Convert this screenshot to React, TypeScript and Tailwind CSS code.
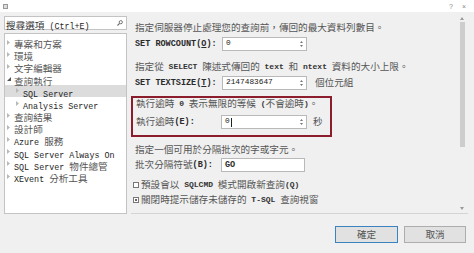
import React from 'react';

const CJK = "font-['Noto_Sans_CJK_TC',sans-serif] text-[9.6px] text-[#555]";
const MONO_B = "font-['Liberation_Mono',monospace] text-[8px] font-bold text-[#333]";
const MONO_L = "font-['Liberation_Mono',monospace] text-[8.5px] font-bold text-[#2a2a2a]";
const MONO_T = "font-['Liberation_Mono',monospace] text-[8.4px] text-[#1e1e1e]";

function Mixed({ text, mono, cjk = CJK }: { text: string; mono: string; cjk?: string }) {
  const parts = text.split(/([\x20-\x7E]+)/).filter(Boolean);
  return (
    <>
      {parts.map((p, i) =>
        /^[\x20-\x7E]+$/.test(p) ? (
          <span key={i} className={mono + ' whitespace-pre'}>
            {p}
          </span>
        ) : (
          <span key={i} className={cjk}>
            {p}
          </span>
        ),
      )}
    </>
  );
}

type Node = { text: string; level: number; open?: boolean; selected?: boolean };

const TREE: Node[] = [
  { text: '專案和方案', level: 0 },
  { text: '環境', level: 0 },
  { text: '文字編輯器', level: 0 },
  { text: '查詢執行', level: 0, open: true },
  { text: 'SQL Server', level: 1, selected: true },
  { text: 'Analysis Server', level: 1 },
  { text: '查詢結果', level: 0 },
  { text: '設計師', level: 0 },
  { text: 'Azure 服務', level: 0 },
  { text: 'SQL Server Always On', level: 0 },
  { text: 'SQL Server 物件總管', level: 0 },
  { text: 'XEvent 分析工具', level: 0 },
];

function Arrow({ open }: { open?: boolean }) {
  return open ? (
    <svg width="4" height="4" viewBox="0 0 4 4">
      <path d="M4 0 L4 4 L0 4 Z" fill="#555" />
    </svg>
  ) : (
    <svg width="3" height="5" viewBox="0 0 3 5">
      <path d="M0 0 L3 2.5 L0 5 Z" fill="#b8b8b8" />
    </svg>
  );
}

function Spinner() {
  return (
    <div className="flex flex-col items-center justify-center gap-[2px] w-[7px] mr-[1px]">
      <svg width="3" height="2" viewBox="0 0 3 2">
        <path d="M0 2 L1.5 0 L3 2 Z" fill="#777" />
      </svg>
      <svg width="3" height="2" viewBox="0 0 3 2">
        <path d="M0 0 L3 0 L1.5 2 Z" fill="#777" />
      </svg>
    </div>
  );
}

function NumBox({ value, w, focused, spin = true }: { value: string; w: string; focused?: boolean; spin?: boolean }) {
  return (
    <div className={'h-[14px] bg-white border border-[#b9b9b9] flex items-center ' + w}>
      <span className={"pl-[3px] font-['Liberation_Mono',monospace] text-[7.8px] text-[#222] leading-none"}>{value}</span>
      {focused && <span className="ml-[1px] w-px h-[9px] bg-[#222]" />}
      <div className="flex-1" />
      {spin && <Spinner />}
    </div>
  );
}

function Label({ children, w }: { children: React.ReactNode; w: string }) {
  return <div className={'shrink-0 flex items-center leading-none ' + w}>{children}</div>;
}

function Check({ checked }: { checked?: boolean }) {
  return (
    <div className="w-[6px] h-[6px] border border-[#777] bg-white flex items-center justify-center mr-[2px]">
      {checked && <div className="w-[2px] h-[2px] bg-[#666]" />}
    </div>
  );
}

export default function App() {
  return (
    <div className="w-[474px] h-[253px] bg-[#f0f0f0] flex flex-col overflow-hidden select-none">
      {/* title bar */}
      <div className="h-[12px] bg-white flex items-center justify-between px-[3px] shrink-0">
        <div className="w-[5px] h-[5px] border border-[#999] bg-[#ddd]" />
        <div className="flex items-center gap-[9px] pr-[5px] text-[7px] leading-none text-[#888] font-['Liberation_Sans',sans-serif]">
          <span>?</span>
          <span>×</span>
        </div>
      </div>

      <div className="flex mt-[3px] h-[199px] shrink-0">
        {/* left pane */}
        <div className="ml-[4px] w-[123px] flex flex-col pt-[1px]">
          <div className="h-[14px] bg-white border border-[#c3c3c3] flex items-center pl-[1px] pr-[3px]">
            <span className="leading-none">
              <Mixed text="搜尋選項 (Ctrl+E)" mono={MONO_T} cjk="font-['Noto_Sans_CJK_TC',sans-serif] text-[9.6px] text-[#333]" />
            </span>
            <div className="flex-1" />
            <svg width="6" height="6" viewBox="0 0 6 6">
              <circle cx="3.8" cy="2.2" r="1.6" fill="none" stroke="#666" strokeWidth="0.9" />
              <path d="M2.6 3.4 L0.5 5.5" stroke="#666" strokeWidth="1.1" />
            </svg>
          </div>
          <div className="mt-[3px] h-[181px] bg-white border border-[#c3c3c3] pt-[2px]">
            {TREE.map((n) => (
              <div
                key={n.text}
                className={'h-[12.2px] flex items-center ' + (n.selected ? 'bg-[#dcdcdc]' : '')}
              >
                <div className={'flex items-center justify-center w-[5px] ' + (n.level ? 'ml-[10px]' : 'ml-[1px]')}>
                  <Arrow open={n.open} />
                </div>
                <span className="ml-[3px] leading-none whitespace-nowrap">
                  <Mixed text={n.text} mono={MONO_T} />
                </span>
              </div>
            ))}
          </div>
        </div>

        {/* right pane */}
        <div className="ml-[4px] mr-[6px] flex-1 flex border-b border-[#d4d4d4]">
          <div className="flex-1 flex flex-col pt-[7px] leading-none">
            <div className="h-[12px] pl-[4px] flex items-center whitespace-nowrap">
              <Mixed text="指定伺服器停止處理您的查詢前，傳回的最大資料列數目。" mono={MONO_B} />
            </div>
            <div className="mt-[3px] pl-[4px] flex items-center">
              <Label w="w-[87px]">
                <span className={MONO_L + ' whitespace-pre'}>
                  SET ROWCOUNT(<span className="underline">O</span>):
                </span>
              </Label>
              <NumBox value="0" w="w-[85px]" />
            </div>
            <div className="mt-[10px] h-[12px] pl-[4px] flex items-center whitespace-nowrap">
              <Mixed text="指定從 SELECT 陳述式傳回的 text 和 ntext 資料的大小上限。" mono={MONO_B} />
            </div>
            <div className="mt-[3px] pl-[4px] flex items-center">
              <Label w="w-[87px]">
                <span className={MONO_L + ' whitespace-pre'}>
                  SET TEXTSIZE(<span className="underline">T</span>):
                </span>
              </Label>
              <NumBox value="2147483647" w="w-[85px]" />
              <span className={CJK + ' ml-[8px]'}>個位元組</span>
            </div>

            <div className="mt-[6px] w-[201px] border-2 border-[#8b1d2c] pl-[3px] pb-[6px]">
              <div className="h-[12px] flex items-center whitespace-nowrap">
                <Mixed text="執行逾時 0 表示無限的等候 (不會逾時)。" mono={MONO_B} />
              </div>
              <div className="mt-[5px] flex items-center">
                <Label w="w-[85px]">
                  <Mixed text="執行逾時(E):" mono={MONO_L} />
                </Label>
                <NumBox value="0" w="w-[86px]" focused />
                <span className={CJK + ' ml-[6px]'}>秒</span>
              </div>
            </div>

            <div className="mt-[7px] h-[12px] pl-[4px] flex items-center whitespace-nowrap">
              <Mixed text="指定一個可用於分隔批次的字或字元。" mono={MONO_B} />
            </div>
            <div className="mt-[2px] pl-[4px] flex items-center">
              <Label w="w-[86px]">
                <Mixed text="批次分隔符號(B):" mono={MONO_L} />
              </Label>
              <div className="h-[14px] w-[84px] bg-white border border-[#b9b9b9] flex items-center">
                <span className={MONO_L + ' pl-[3px]'}>GO</span>
              </div>
            </div>
            <div className="mt-[7px] h-[12px] pl-[2px] flex items-center whitespace-nowrap">
              <Check />
              <Mixed text="預設會以 SQLCMD 模式開啟新查詢(Q)" mono={MONO_B} />
            </div>
            <div className="mt-[3px] h-[12px] pl-[2px] flex items-center whitespace-nowrap">
              <Check checked />
              <Mixed text="關閉時提示儲存未儲存的 T-SQL 查詢視窗" mono={MONO_B} />
            </div>
          </div>

          {/* scrollbar */}
          <div className="w-[12px] flex flex-col items-center pt-[2px] pb-[3px]">
            <svg width="4" height="3" viewBox="0 0 4 3">
              <path d="M0 3 L2 0 L4 3 Z" fill="#9a9a9a" />
            </svg>
            <div className="mt-[2px] w-[5px] h-[125px] bg-[#cdcdcd]" />
            <div className="flex-1" />
            <svg width="4" height="3" viewBox="0 0 4 3">
              <path d="M0 0 L4 0 L2 3 Z" fill="#9a9a9a" />
            </svg>
          </div>
        </div>
      </div>

      {/* footer */}
      <div className="flex-1 flex justify-end items-start pt-[12px] pr-[8px] gap-[6px]">
        <button className="w-[63px] h-[17px] bg-[#e1e1e1] border border-[#3b83c0] flex items-center justify-center">
          <span className={CJK + ' text-[#444]'}>確定</span>
        </button>
        <button className="w-[62px] h-[17px] bg-[#e1e1e1] border border-[#adadad] flex items-center justify-center">
          <span className={CJK + ' text-[#444]'}>取消</span>
        </button>
      </div>
    </div>
  );
}
